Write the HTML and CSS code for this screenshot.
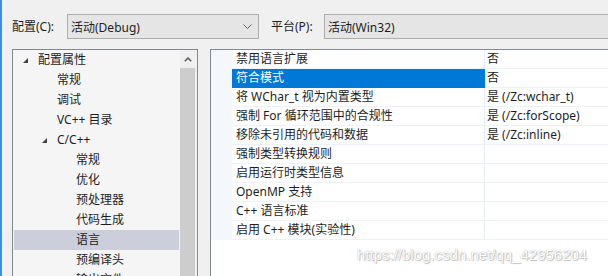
FILE: index.html
```html
<!DOCTYPE html>
<html lang="zh-CN">
<head>
    <meta charset="UTF-8">
    <meta name="viewport" content="width=device-width, initial-scale=1.0">
    <title>属性页</title>
    <link rel="stylesheet" href="styles.css">
</head>
<body>
    <div class="window">
        <div class="toolbar">
            <span class="field-label label-config">配置(C):</span>
            <div class="combo combo-config">
                <span class="combo-text">活动(Debug)</span>
                <svg class="chevron" width="9" height="5" viewBox="0 0 9 5">
                    <polyline points="0.5,0.5 4.5,4.5 8.5,0.5" fill="none" stroke="#606060" stroke-width="1"/>
                </svg>
            </div>
            <span class="field-label label-platform">平台(P):</span>
            <div class="combo combo-platform">
                <span class="combo-text">活动(Win32)</span>
            </div>
        </div>

        <div class="panels">
            <div class="tree-panel">
                <ul class="tree">
                    <li class="level-1"><span class="expander"><svg width="5" height="5" viewBox="0 0 5 5"><polygon points="5,0 5,5 0,5" fill="#404040"/></svg></span>配置属性</li>
                    <li class="level-2"><span class="expander"></span>常规</li>
                    <li class="level-2"><span class="expander"></span>调试</li>
                    <li class="level-2"><span class="expander"></span>VC++ 目录</li>
                    <li class="level-2"><span class="expander"><svg width="5" height="5" viewBox="0 0 5 5"><polygon points="5,0 5,5 0,5" fill="#404040"/></svg></span>C/C++</li>
                    <li class="level-3"><span class="expander"></span>常规</li>
                    <li class="level-3"><span class="expander"></span>优化</li>
                    <li class="level-3"><span class="expander"></span>预处理器</li>
                    <li class="level-3"><span class="expander"></span>代码生成</li>
                    <li class="level-3 selected"><span class="expander"></span>语言</li>
                    <li class="level-3"><span class="expander"></span>预编译头</li>
                    <li class="level-3"><span class="expander"></span>输出文件</li>
                </ul>
                <div class="scrollbar">
                    <div class="scroll-up">
                        <svg width="8" height="5" viewBox="0 0 8 5">
                            <polyline points="0.8,4.2 4,1 7.2,4.2" fill="none" stroke="#606060" stroke-width="1.6"/>
                        </svg>
                    </div>
                    <div class="scroll-thumb"></div>
                </div>
            </div>

            <div class="grid-panel">
                <div class="grid-row">
                    <div class="gutter"></div>
                    <div class="cell name">禁用语言扩展</div>
                    <div class="cell value">否</div>
                </div>
                <div class="grid-row selected">
                    <div class="gutter"></div>
                    <div class="cell name">符合模式</div>
                    <div class="cell value">否</div>
                </div>
                <div class="grid-row">
                    <div class="gutter"></div>
                    <div class="cell name">将 WChar_t 视为内置类型</div>
                    <div class="cell value">是 (/Zc:wchar_t)</div>
                </div>
                <div class="grid-row">
                    <div class="gutter"></div>
                    <div class="cell name">强制 For 循环范围中的合规性</div>
                    <div class="cell value">是 (/Zc:forScope)</div>
                </div>
                <div class="grid-row">
                    <div class="gutter"></div>
                    <div class="cell name">移除未引用的代码和数据</div>
                    <div class="cell value">是 (/Zc:inline)</div>
                </div>
                <div class="grid-row">
                    <div class="gutter"></div>
                    <div class="cell name">强制类型转换规则</div>
                    <div class="cell value"></div>
                </div>
                <div class="grid-row">
                    <div class="gutter"></div>
                    <div class="cell name">启用运行时类型信息</div>
                    <div class="cell value"></div>
                </div>
                <div class="grid-row">
                    <div class="gutter"></div>
                    <div class="cell name">OpenMP 支持</div>
                    <div class="cell value"></div>
                </div>
                <div class="grid-row">
                    <div class="gutter"></div>
                    <div class="cell name">C++ 语言标准</div>
                    <div class="cell value"></div>
                </div>
                <div class="grid-row">
                    <div class="gutter"></div>
                    <div class="cell name">启用 C++ 模块(实验性)</div>
                    <div class="cell value"></div>
                </div>
            </div>
        </div>

        <div class="watermark">https://blog.csdn.net/qq_42956204</div>
    </div>
</body>
</html>
```

FILE: styles.css
```css
html, body {
    margin: 0;
    padding: 0;
}

body {
    width: 608px;
    height: 276px;
    overflow: hidden;
    background-color: #f0f0f0;
    font-family: "Noto Sans", "Noto Sans CJK SC", sans-serif;
    font-size: 12px;
    color: #1e1e1e;
}

.window {
    position: relative;
    height: 276px;
    border-left: 2px solid #3a8ee6;
    box-sizing: border-box;
    display: flex;
    flex-direction: column;
}

/* top bar with the two combo boxes */
.toolbar {
    display: flex;
    align-items: center;
    padding: 14px 0 0 10px;
    height: 25px;
}

.field-label {
    line-height: 25px;
    white-space: nowrap;
}

.label-config {
    width: 55px;
}

.label-platform {
    width: 53px;
    margin-left: 12px;
}

.combo {
    height: 25px;
    box-sizing: border-box;
    border: 1px solid #adadad;
    background-color: #e5e5e5;
    display: flex;
    align-items: center;
    padding-left: 3px;
}

.combo-text {
    flex: 1;
    white-space: nowrap;
}

.combo-config {
    width: 192px;
}

.combo-platform {
    flex: 1;
    margin-right: -20px;
}

.chevron {
    margin-right: 6px;
}

/* panels */
.panels {
    flex: 1;
    display: flex;
    margin-top: 10px;
    min-height: 0;
}

.tree-panel {
    width: 186px;
    margin-left: 10px;
    box-sizing: border-box;
    border: 1px solid #828790;
    border-bottom: none;
    display: flex;
    background-color: #f5f5f5;
}

.tree {
    flex: 1;
    list-style: none;
    margin: 0;
    padding: 0 1px;
    overflow: hidden;
}

.tree li {
    height: 20px;
    line-height: 20px;
    display: flex;
    align-items: center;
    white-space: nowrap;
}

.tree li.level-1 {
    padding-left: 8px;
}

.tree li.level-2 {
    padding-left: 27px;
}

.tree li.level-3 {
    padding-left: 46px;
}

.tree li.selected {
    background-color: #cccedb;
}

.expander {
    width: 16px;
    height: 20px;
    display: flex;
    align-items: center;
    flex-shrink: 0;
}

.expander svg {
    margin-left: 1px;
    margin-top: 1px;
}

.scrollbar {
    width: 17px;
    background-color: #f0f0f0;
    display: flex;
    flex-direction: column;
}

.scroll-up {
    height: 18px;
    display: flex;
    align-items: center;
    justify-content: center;
    padding-right: 2px;
}

.scroll-thumb {
    flex: 1;
    margin-right: 2px;
    background-color: #cdcdcd;
}

/* property grid */
.grid-panel {
    flex: 1;
    margin-left: 12px;
    margin-right: -20px;
    border-top: 1px solid #828790;
    border-left: 1px solid #828790;
    background-color: #fff;
}

.grid-row {
    display: flex;
    height: 19px;
}

.gutter {
    width: 21px;
    background-color: #f4f7fc;
}

.cell {
    box-sizing: border-box;
    height: 19px;
    line-height: 18px;
    border-bottom: 1px solid #edf1f8;
    white-space: nowrap;
    overflow: hidden;
}

.cell.name {
    width: 253px;
    padding-left: 4px;
    border-right: 1px solid #e6ecf5;
}

.cell.value {
    flex: 1;
    padding-left: 2px;
}

.grid-row.selected .cell.name {
    background-color: #0078d7;
    border-right-color: #0078d7;
    border-bottom-color: #0078d7;
    color: #fff;
}

.watermark {
    position: absolute;
    left: 355px;
    top: 246px;
    font-family: "Liberation Sans", Arial, sans-serif;
    font-size: 15px;
    color: #fff;
    text-shadow: 0 0 1px #9a9a9a, 1px 1px 1px #c4c4c4;
    white-space: nowrap;
}
```
